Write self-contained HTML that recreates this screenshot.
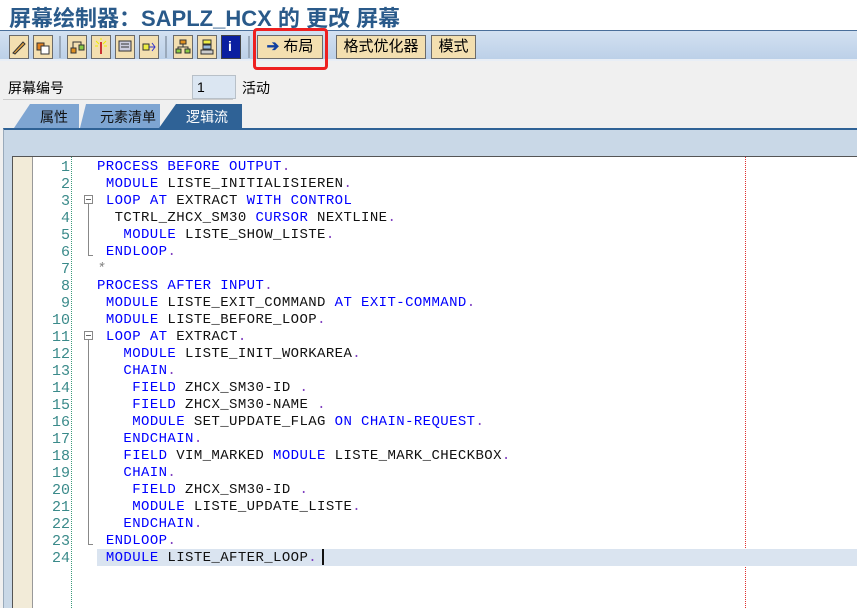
<!DOCTYPE html>
<html><head><meta charset="utf-8"><style>
*{margin:0;padding:0;box-sizing:border-box}
body{width:857px;height:608px;overflow:hidden;background:#f0f0f0;font-family:"Liberation Sans","Noto Sans CJK SC",sans-serif;position:relative}
.abs{position:absolute}
.title{left:0;top:0;width:857px;height:31px;background:#fff;color:#2a5a8a;font-size:22px;font-weight:bold;padding:1px 0 0 9px;border-bottom:1px solid #4a6f9a;white-space:nowrap}
.tb{left:0;top:31px;width:857px;height:30px;background:linear-gradient(#d3e1f1,#bcd0e8);border-bottom:2px solid #e8eef6}
.ib{top:35px;width:20px;height:24px;background:#f3dfb0;border:1px solid #6b6b6b}
.sep{top:36px;width:2px;height:22px;background:#9aa9bb}
.bb{top:35px;height:24px;background:#f3dfb0;border:1px solid #6b6b6b;font-size:15px;text-align:center;line-height:22px}
.code{font-family:"Liberation Mono",monospace;font-size:14px;letter-spacing:0.4px;white-space:pre;line-height:17px}
.k{color:#0000ff}.p{color:#8040c0}.n{color:#111}
</style></head><body>
<div class="abs title">屏幕绘制器：SAPLZ_HCX 的 更改 屏幕</div>
<div class="abs tb"></div>
<div class="abs ib" style="left:9px"></div><div class="abs ib" style="left:33px"></div>
<div class="abs sep" style="left:59px"></div>
<div class="abs ib" style="left:67px"></div><div class="abs ib" style="left:91px"></div><div class="abs ib" style="left:115px"></div><div class="abs ib" style="left:139px"></div>
<div class="abs sep" style="left:165px"></div>
<div class="abs ib" style="left:173px"></div><div class="abs ib" style="left:197px"></div><div class="abs ib" style="left:221px;background:#0a1fa0;border-color:#444"><span style="position:absolute;left:6px;top:2px;color:#fff;font-weight:bold;font-size:14px">i</span></div>
<div class="abs sep" style="left:248px"></div>
<svg class="abs" style="left:11px;top:38px" width="16" height="18"><path d="M2 15 L12 4 L14 6 L4 16 Z" fill="#e0a040" stroke="#333"/></svg>
<svg class="abs" style="left:35px;top:38px" width="16" height="18"><rect x="2" y="5" width="7" height="7" fill="#e08020" stroke="#333"/><rect x="6" y="8" width="8" height="8" fill="#fff" stroke="#333"/></svg>
<svg class="abs" style="left:69px;top:38px" width="16" height="18"><rect x="2" y="10" width="5" height="5" fill="#e09020" stroke="#333"/><rect x="10" y="7" width="5" height="5" fill="#8c4" stroke="#333"/><path d="M4 10 V4 H12 V7" fill="none" stroke="#333"/></svg>
<svg class="abs" style="left:93px;top:38px" width="16" height="18"><path d="M8 4 V16" stroke="#c33" stroke-width="2"/><path d="M3 3 L6 6 M13 3 L10 6 M8 0 V2 M2 8 H5 M11 8 H14" stroke="#ee0"/></svg>
<svg class="abs" style="left:117px;top:38px" width="16" height="18"><rect x="2" y="3" width="12" height="10" fill="#ccd" stroke="#333"/><path d="M4 6 H12 M4 9 H12" stroke="#333"/></svg>
<svg class="abs" style="left:141px;top:38px" width="16" height="18"><rect x="2" y="6" width="6" height="6" fill="#ee4" stroke="#333"/><path d="M8 9 H14 M11 5 L14 9 L11 13" fill="none" stroke="#33c"/></svg>
<svg class="abs" style="left:175px;top:38px" width="16" height="18"><rect x="5" y="2" width="6" height="4" fill="#e09020" stroke="#333"/><rect x="1" y="11" width="5" height="4" fill="#8c4" stroke="#333"/><rect x="10" y="11" width="5" height="4" fill="#8c4" stroke="#333"/><path d="M8 6 V9 M3 11 V9 H13 V11" fill="none" stroke="#333"/></svg>
<svg class="abs" style="left:199px;top:38px" width="16" height="18"><rect x="4" y="2" width="8" height="4" fill="#ee4" stroke="#333"/><rect x="4" y="7" width="8" height="4" fill="#9bd" stroke="#333"/><rect x="2" y="12" width="12" height="4" fill="#ccc" stroke="#333"/></svg>
<div class="abs" style="left:253px;top:28px;width:75px;height:42px;border:3px solid #ee2020;border-radius:4px"></div>
<div class="abs bb" style="left:257px;width:66px"><span style="color:#1040a0;font-weight:bold">➔</span> 布局</div>
<div class="abs bb" style="left:336px;width:90px">格式优化器</div>
<div class="abs bb" style="left:431px;width:45px">模式</div>
<div class="abs" style="left:3px;top:79px;width:230px;height:21px;border-bottom:1px solid #ccc"></div>
<div class="abs" style="left:8px;top:78px;font-size:14px">屏幕编号</div>
<div class="abs" style="left:192px;top:75px;width:44px;height:24px;background:#dbe6f2;border:1px solid #b8c0c8;font-size:14px;padding:3px 0 0 4px">1</div>
<div class="abs" style="left:242px;top:78px;font-size:14px">活动</div>
<svg class="abs" style="left:0;top:102px" width="260" height="28">
<path d="M14 26 L30 2 H79 V26 Z" fill="#7ea5d2"/><path d="M80 26 L86 2 H160 V26 Z" fill="#7ea5d2"/><path d="M159 26 L176 2 H242 V26 Z" fill="#2f6296"/>
<text x="40" y="20" font-size="14" fill="#111" font-family="Noto Sans CJK SC">属性</text>
<text x="100" y="20" font-size="14" fill="#111" font-family="Noto Sans CJK SC">元素清单</text>
<text x="186" y="20" font-size="14" fill="#fff" font-family="Noto Sans CJK SC">逻辑流</text></svg>
<div class="abs" style="left:3px;top:128px;width:854px;height:480px;background:#c9d8e7;border-top:2px solid #2f6296;border-left:1px solid #9ab"></div>
<div class="abs" style="left:12px;top:156px;width:845px;height:452px;background:#fff;border:1px solid #555;border-right:none;border-bottom:none"></div>
<div class="abs" style="left:13px;top:157px;width:20px;height:451px;background:#f2ebd8;border-right:1px solid #999"></div>
<div class="abs" style="left:71px;top:157px;height:451px;border-left:1px dotted #3a9a7a"></div>
<div class="abs" style="left:745px;top:157px;height:451px;border-left:1px dotted #e03030"></div>
<div class="abs" style="left:97px;top:549px;width:760px;height:17px;background:#dae4f0"></div>
<div class="abs" style="left:322px;top:549px;width:2px;height:16px;background:#111"></div>
<div class="abs code" style="left:30px;top:159px;width:40px;text-align:right;color:#3a8a8a;letter-spacing:0;font-size:15px">1
2
3
4
5
6
7
8
9
10
11
12
13
14
15
16
17
18
19
20
21
22
23
24</div>
<div class="abs" style="left:84px;top:195px;width:9px;height:9px;border:1px solid #888"><div style="position:absolute;left:1px;top:3px;width:5px;height:1px;background:#666"></div></div>
<div class="abs" style="left:88px;top:204px;width:5px;height:52px;border-left:1px solid #888;border-bottom:1px solid #888"></div>
<div class="abs" style="left:84px;top:331px;width:9px;height:9px;border:1px solid #888"><div style="position:absolute;left:1px;top:3px;width:5px;height:1px;background:#666"></div></div>
<div class="abs" style="left:88px;top:340px;width:5px;height:205px;border-left:1px solid #888;border-bottom:1px solid #888"></div>
<div class="abs code n" style="left:97px;top:159px"><span class="k">PROCESS BEFORE OUTPUT</span><span class="p">.</span>
 <span class="k">MODULE</span> LISTE_INITIALISIEREN<span class="p">.</span>
 <span class="k">LOOP AT</span> EXTRACT <span class="k">WITH CONTROL</span>
  TCTRL_ZHCX_SM30 <span class="k">CURSOR</span> NEXTLINE<span class="p">.</span>
   <span class="k">MODULE</span> LISTE_SHOW_LISTE<span class="p">.</span>
 <span class="k">ENDLOOP</span><span class="p">.</span>
<span style="color:#808080;font-style:italic">*</span>
<span class="k">PROCESS AFTER INPUT</span><span class="p">.</span>
 <span class="k">MODULE</span> LISTE_EXIT_COMMAND <span class="k">AT EXIT-COMMAND</span><span class="p">.</span>
 <span class="k">MODULE</span> LISTE_BEFORE_LOOP<span class="p">.</span>
 <span class="k">LOOP AT</span> EXTRACT<span class="p">.</span>
   <span class="k">MODULE</span> LISTE_INIT_WORKAREA<span class="p">.</span>
   <span class="k">CHAIN</span><span class="p">.</span>
    <span class="k">FIELD</span> ZHCX_SM30-ID <span class="p">.</span>
    <span class="k">FIELD</span> ZHCX_SM30-NAME <span class="p">.</span>
    <span class="k">MODULE</span> SET_UPDATE_FLAG <span class="k">ON CHAIN-REQUEST</span><span class="p">.</span>
   <span class="k">ENDCHAIN</span><span class="p">.</span>
   <span class="k">FIELD</span> VIM_MARKED <span class="k">MODULE</span> LISTE_MARK_CHECKBOX<span class="p">.</span>
   <span class="k">CHAIN</span><span class="p">.</span>
    <span class="k">FIELD</span> ZHCX_SM30-ID <span class="p">.</span>
    <span class="k">MODULE</span> LISTE_UPDATE_LISTE<span class="p">.</span>
   <span class="k">ENDCHAIN</span><span class="p">.</span>
 <span class="k">ENDLOOP</span><span class="p">.</span>
 <span class="k">MODULE</span> LISTE_AFTER_LOOP<span class="p">.</span></div>
</body></html>
